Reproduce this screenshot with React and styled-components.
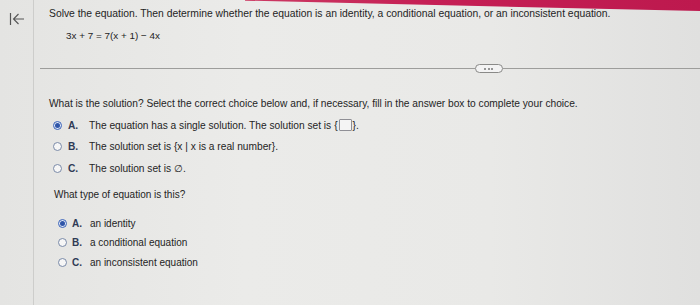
import React from "react";
import styled, { createGlobalStyle } from "styled-components";

const Global = createGlobalStyle`
  html, body { margin: 0; padding: 0; }
  body {
    width: 700px; height: 305px; overflow: hidden;
    background: #e8e8e6;
    font-family: "Liberation Sans", Arial, sans-serif;
    color: #242424;
  }
`;

const Page = styled.div`
  display: flex;
  width: 700px;
  height: 305px;
  background: linear-gradient(90deg, #e4e4e2 0%, #ebebe9 35%, #e9e9e7 70%, #e0e0df 100%);
  position: relative;
  overflow: hidden;
`;

const TopStripe = styled.div`
  position: absolute;
  top: 0;
  left: 245px;
  right: 0;
  height: 11px;
  background: linear-gradient(90deg, #cc3a63 0%, #c51f55 40%, #bd194e 100%);
  clip-path: polygon(0 0, 100% 0, 100% 100%, 0 6%);
`;

const Sidebar = styled.div`
  width: 34px;
  flex: none;
  border-right: 1px solid #cdcdcb;
  display: flex;
  justify-content: center;
  padding-top: 12px;
  box-sizing: border-box;
`;

const Main = styled.div`
  flex: 1;
  display: flex;
  flex-direction: column;
  padding-top: 8px;
`;

const Prompt = styled.div`
  font-size: 10.35px;
  padding-left: 15px;
`;

const Equation = styled.div`
  font-size: 9.9px;
  padding-left: 32px;
  margin-top: 11px;
`;

const DividerRow = styled.div`
  display: flex;
  align-items: center;
  margin-top: 23px;
  padding-left: 6px;
`;

const Line = styled.div`
  flex: ${p => p.$grow};
  height: 1px;
  background: #9d9d9b;
`;

const Pill = styled.div`
  width: 26px;
  height: 7px;
  border: 1px solid #8a8a88;
  border-radius: 5px;
  background: #f3f3f3;
  display: flex;
  align-items: center;
  justify-content: center;
  gap: 1.5px;
  flex: none;
`;

const Dot = styled.span`
  width: 2px;
  height: 2px;
  border-radius: 50%;
  background: #777;
`;

const Question = styled.div`
  font-size: ${p => p.$size}px;
  padding-left: ${p => p.$indent}px;
  margin-top: ${p => p.$mt}px;
`;

const Choices = styled.div`
  display: flex;
  flex-direction: column;
  gap: ${p => p.$gap}px;
  padding-left: ${p => p.$indent}px;
  margin-top: ${p => p.$mt}px;
  font-size: ${p => p.$size}px;
`;

const Choice = styled.div`
  display: flex;
  align-items: center;
  height: 12px;
`;

const Radio = styled.span`
  width: 9px;
  height: 9px;
  border-radius: 50%;
  box-sizing: border-box;
  border: 1px solid ${p => (p.$on ? "#3b63b8" : "#7a8aa8")};
  background: ${p => (p.$on ? "#dfe7f6" : "#f6f6f6")};
  display: flex;
  align-items: center;
  justify-content: center;
  flex: none;
  &::after {
    content: "";
    width: 5px;
    height: 5px;
    border-radius: 50%;
    background: ${p => (p.$on ? "#2f55a8" : "transparent")};
  }
`;

const Letter = styled.span`
  font-weight: bold;
  color: #2f3a55;
  width: ${p => p.$w}px;
  padding-left: ${p => p.$pl}px;
  flex: none;
`;

const AnswerBox = styled.span`
  display: inline-flex;
  align-items: center;
  margin-left: 3px;
`;

const Box = styled.span`
  display: inline-block;
  width: 11px;
  height: 10px;
  border: 1px solid #8f8f95;
  border-radius: 1px;
  background: #f4f4f4;
  margin: 0 1px;
`;

function BackIcon() {
  return (
    <svg width="16" height="14" viewBox="0 0 16 14">
      <path d="M1.5 1v12" stroke="#555" strokeWidth="1.2" fill="none" />
      <path d="M15 7H4.5M9.5 2L4.5 7l5 5" stroke="#555" strokeWidth="1.1" fill="none" />
    </svg>
  );
}

export default function App() {
  return (
    <>
      <Global />
      <Page>
        <TopStripe />
        <Sidebar>
          <BackIcon />
        </Sidebar>
        <Main>
          <Prompt>
            Solve the equation. Then determine whether the equation is an identity, a conditional equation, or an inconsistent equation.
          </Prompt>
          <Equation>3x + 7 = 7(x + 1) − 4x</Equation>
          <DividerRow>
            <Line $grow={434} />
            <Pill>
              <Dot />
              <Dot />
              <Dot />
            </Pill>
            <Line $grow={197} />
          </DividerRow>
          <Question $indent={15} $mt={25} $size={10.2}>
            What is the solution? Select the correct choice below and, if necessary, fill in the answer box to complete your choice.
          </Question>
          <Choices $indent={19} $mt={10} $gap={9.5} $size={10.2}>
            <Choice>
              <Radio $on />
              <Letter $w={21} $pl={6}>A.</Letter>
              The equation has a single solution. The solution set is
              <AnswerBox>
                {"{"}
                <Box />
                {"}"}.
              </AnswerBox>
            </Choice>
            <Choice>
              <Radio />
              <Letter $w={21} $pl={6}>B.</Letter>
              The solution set is {"{"}x | x is a real number{"}"}.
            </Choice>
            <Choice>
              <Radio />
              <Letter $w={21} $pl={6}>C.</Letter>
              The solution set is ∅.
            </Choice>
          </Choices>
          <Question $indent={20} $mt={15} $size={10}>
            What type of equation is this?
          </Question>
          <Choices $indent={24} $mt={17} $gap={7.5} $size={10}>
            <Choice>
              <Radio $on />
              <Letter $w={18} $pl={5}>A.</Letter>
              an identity
            </Choice>
            <Choice>
              <Radio />
              <Letter $w={18} $pl={5}>B.</Letter>
              a conditional equation
            </Choice>
            <Choice>
              <Radio />
              <Letter $w={18} $pl={5}>C.</Letter>
              an inconsistent equation
            </Choice>
          </Choices>
        </Main>
      </Page>
    </>
  );
}
